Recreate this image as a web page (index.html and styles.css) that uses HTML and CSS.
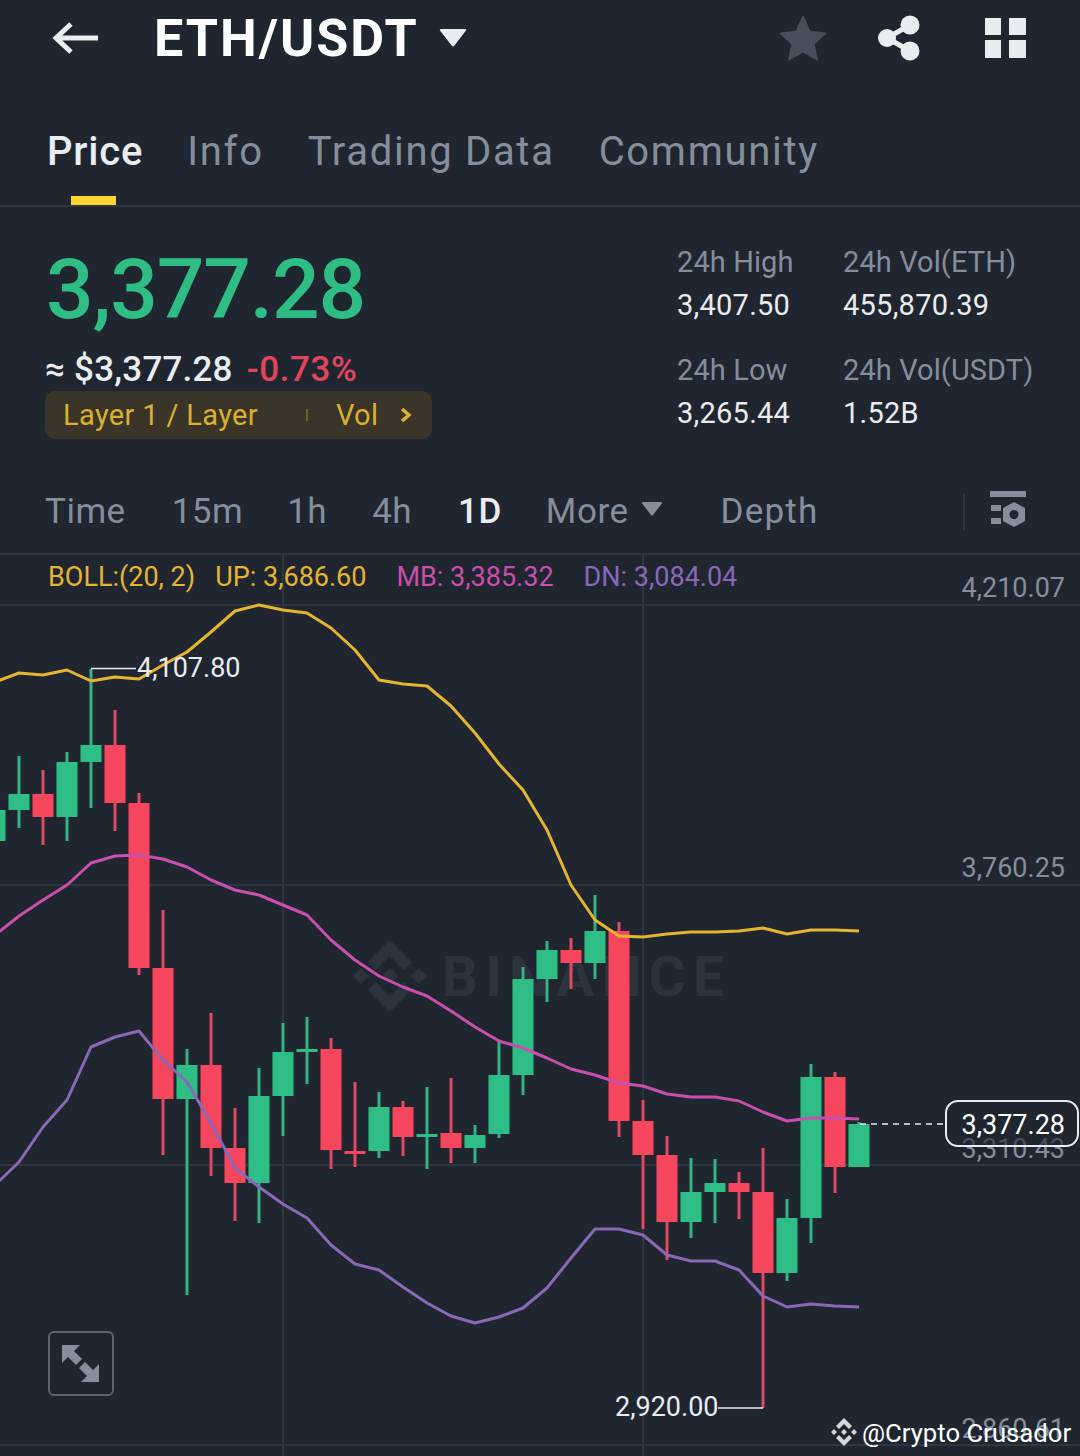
FILE: index.html
```html
<!DOCTYPE html>
<html lang="en">

<head>
  <meta charset="utf-8">
  <title>ETH/USDT</title>
  <link rel="stylesheet" href="styles.css">
</head>

<body>
  <div id="mainContainer">
    <div id="topBar">
      <svg class="backIcon" width="46" height="32" viewBox="0 0 46 32">
        <path d="M46 16H5M19 2L4 16l15 14" />
      </svg>
      <span class="pairName">ETH/USDT</span>
      <svg class="pairCaret" width="28" height="20" viewBox="0 0 28 20">
        <path d="M2 2h24a1 1 0 0 1 1 1.600L15 19a1.500 1.500 0 0 1-2 0L1 3.600A1 1 0 0 1 2 2z" />
      </svg>
      <div class="topActions">
        <svg class="starIcon" width="46" height="46" viewBox="0 0 46 46">
          <path d="M23 2l6.500 14.500L45 18.500 33.500 29 37 44.500 23 36.500 9 44.500 12.500 29 1 18.500l15.500-2z" />
        </svg>
        <svg class="shareIcon" width="42" height="46" viewBox="0 0 42 46">
          <path class="shareLines" d="M32 10L9 23l23 13" />
          <circle cx="32" cy="10" r="9.500" />
          <circle cx="9" cy="23" r="9" />
          <circle cx="32" cy="36" r="9.500" />
        </svg>
        <svg class="gridIcon" width="41" height="40" viewBox="0 0 41 40">
          <path d="M0 0h16v17H0zM24 0h17v17H24zM0 22h16v18H0zM24 22h17v18H24z" />
        </svg>
      </div>
    </div>

    <div id="tabBar">
      <a class="tab active">Price</a>
      <a class="tab">Info</a>
      <a class="tab">Trading Data</a>
      <a class="tab">Community</a>
    </div>

    <div id="summary">
      <div class="priceBlock">
        <div class="lastPrice">3,377.28</div>
        <div class="fiatLine"><span class="fiat">≈ $3,377.28</span><span class="change">-0.73%</span></div>
        <div class="tagPill">
          <span class="tagName">Layer 1 / Layer</span>
          <i class="tagRule"></i>
          <span class="tagVol">Vol</span>
          <svg class="tagArrow" width="12" height="16" viewBox="0 0 12 16">
            <path d="M2 2l7 6-7 6" />
          </svg>
        </div>
      </div>
      <div class="statGrid">
        <div class="stat"><span class="statLabel">24h High</span><span class="statValue">3,407.50</span></div>
        <div class="stat"><span class="statLabel">24h Vol(ETH)</span><span class="statValue">455,870.39</span></div>
        <div class="stat"><span class="statLabel">24h Low</span><span class="statValue">3,265.44</span></div>
        <div class="stat"><span class="statLabel">24h Vol(USDT)</span><span class="statValue">1.52B</span></div>
      </div>
    </div>

    <div id="intervalBar">
      <span class="interval time">Time</span>
      <span class="interval m15">15m</span>
      <span class="interval h1">1h</span>
      <span class="interval h4">4h</span>
      <span class="interval d1 active">1D</span>
      <span class="interval more">More</span>
      <svg class="moreCaret" width="20" height="14" viewBox="0 0 20 14">
        <path d="M1 0h18a1 1 0 0 1 .8 1.600L11 13a1.300 1.300 0 0 1-2 0L.2 1.600A1 1 0 0 1 1 0z" />
      </svg>
      <span class="interval depth">Depth</span>
      <i class="intervalRule"></i>
      <svg class="settingsIcon" width="37" height="37" viewBox="0 0 37 37">
        <path d="M0 0h36v6H0zM1 14h10v6H1zM1 27h10v6H1z" />
        <path fill-rule="evenodd" d="M24 11l11 6v13l-11 6-11-6V17zM24 19a4.500 4.500 0 1 0 .01 0z" />
      </svg>
    </div>

    <div id="chart">
      <svg class="chartCanvas" width="1080" height="901" viewBox="0 555 1080 901">
        <path class="grid" d="M0 605H1080M0 885H1080M0 1165H1080M0 1445H1080M283 555V1456M643 555V1456" />

        <g class="watermark">
          <path d="M390 940l22 22-8 8-14-14-14 14-8-8zM361 968l8 8-8 8-8-8zM419 968l8 8-8 8-8-8zM390 968l8 8-8 8-8-8zM390 1012l-22-22 8-8 14 14 14-14 8 8z" />
          <text class="markName" x="442" y="996">BINANCE</text>
        </g>

        <!-- candles: wicks and bodies are strokes, one path per colour -->
        <path class="wick up" d="M19 756V828M67 752V841M91 669V808M187 1049V1295M259 1068V1223M283 1023V1136M307 1017V1084M379 1092V1158M427 1087V1169M475 1125V1163M499 1041V1138M523 967V1095M547 941V1002M595 895V979M691 1158V1238M715 1159V1223M787 1199V1281M811 1064V1243M859 1122V1126" />
        <path class="wick down" d="M43 770V845M115 710V831M139 793V975M163 910V1155M211 1013V1176M235 1108V1221M331 1038V1169M355 1082V1167M403 1101V1156M451 1078V1163M571 938V989M619 922V1137M643 1100V1229M667 1136V1260M739 1172V1219M763 1148V1408M835 1072V1193" />
        <path class="body up" d="M-5 810V841M19 794V810M67 762V817M91 745V762M187 1065V1099M259 1096V1183M283 1052V1096M307 1049V1052M379 1107V1151M427 1134V1137M475 1135V1148M499 1075V1134M523 979V1075M547 950V979M595 931V963M691 1192V1222M715 1183V1192M787 1218V1273M811 1077V1218M859 1124V1167" />
        <path class="body down" d="M43 794V817M115 745V803M139 803V968M163 968V1099M211 1065V1148M235 1148V1183M331 1049V1150M355 1151V1154M403 1107V1137M451 1133V1148M571 950V963M619 931V1121M643 1121V1155M667 1155V1222M739 1183V1192M763 1192V1273M835 1077V1167" />

        <polyline class="band upper" points="-5,682 19,673 43,675 67,670 91,681 115,677 139,679 163,665 187,652 211,632 235,611 259,605 283,610 307,613 331,628 355,650 379,680 403,684 427,686 451,706 475,733 499,764 523,790 547,830 571,885 595,920 619,936 643,937 667,934 691,932 715,932 739,931 763,928 787,934 811,930 835,930 859,931" />
        <polyline class="band middle" points="-5,935 19,916 43,900 67,885 91,863 115,856 139,855 163,859 187,867 211,880 235,890 259,895 283,905 307,915 331,940 355,960 379,976 403,987 427,996 451,1011 475,1027 499,1041 523,1048 547,1058 571,1069 595,1075 619,1083 643,1086 667,1094 691,1097 715,1097 739,1101 763,1112 787,1121 811,1118 835,1118 859,1119" />
        <polyline class="band lower" points="-5,1185 19,1162 43,1127 67,1100 91,1047 115,1037 139,1031 163,1060 187,1082 211,1123 235,1168 259,1187 283,1204 307,1218 331,1245 355,1264 379,1270 403,1287 427,1303 451,1316 475,1323 499,1317 523,1308 547,1288 571,1258 595,1229 619,1229 643,1235 667,1255 691,1261 715,1261 739,1270 763,1296 787,1307 811,1304 835,1306 859,1307" />

        <text class="axisLabel" x="1065" y="597">4,210.07</text>
        <text class="axisLabel" x="1065" y="877">3,760.25</text>
        <text class="axisLabel" x="1065" y="1158">3,310.43</text>
        <text class="axisLabel" x="1065" y="1438">2,860.61</text>

        <path class="callout" d="M91 668.500H136M718 1408H763" />
        <text class="extreme" x="137" y="677">4,107.80</text>
        <text class="extreme" x="615" y="1416">2,920.00</text>

        <path class="lastLine" d="M860 1124H946" />
        <rect class="lastBox" x="946" y="1101" width="132" height="45" rx="12" />
        <text class="lastValue" x="1065" y="1134">3,377.28</text>

        <path class="creditLogo" d="M844 1418l8 8-3 3-5-5-5 5-3-3zM834 1429l3 3-3 3-3-3zM854 1429l3 3-3 3-3-3zM844 1429l3 3-3 3-3-3zM844 1446l-8-8 3-3 5 5 5-5 3 3z" />
        <text class="credit" x="862" y="1442">@Crypto Crusador</text>
      </svg>

      <div class="legend">
        <span class="legendBoll">BOLL:(20, 2)</span>
        <span class="legendUp">UP: 3,686.60</span>
        <span class="legendMb">MB: 3,385.32</span>
        <span class="legendDn">DN: 3,084.04</span>
      </div>

      <button class="expandButton">
        <svg width="38" height="38" viewBox="0 0 38 38">
          <path d="M0 0h18L12 6 20 14 14 20 6 12 0 18zM37 37H19l6-6-8-8 6-6 8 8 6-6z" />
        </svg>
      </button>
    </div>
  </div>
</body>

</html>
```

FILE: styles.css
```css
:root {
  --page-bg: #1f2630;
  --line: #2f3640;
  --text-white: #eaecef;
  --text-gray: #848e9c;
  --theme-yellow: #fcd535;
  --up-green: #2ebd85;
  --down-red: #f6465d;
}

* {
  padding: 0;
  margin: 0;
  box-sizing: border-box;
}

html,
body {
  height: 100%;
  width: 100%;
  overflow: hidden;
  background: var(--page-bg);
  font-family: Roboto, "Liberation Sans", sans-serif;
}

#mainContainer {
  width: 1080px;
  height: 1456px;
  overflow: hidden;
  color: var(--text-white);
}

#topBar {
  display: flex;
  align-items: center;
  height: 76px;
  padding-left: 52px;
}

.backIcon path {
  fill: none;
  stroke: var(--text-white);
  stroke-width: 5;
}

.pairName {
  margin-left: 56px;
  font-size: 52px;
  font-weight: 700;
  letter-spacing: 2px;
  color: #fff;
}

.pairCaret {
  margin-left: 20px;
  margin-top: -2px;
  fill: var(--text-white);
}

.topActions {
  display: flex;
  align-items: center;
  margin-left: auto;
  padding-right: 54px;
}

.starIcon {
  fill: #474f5c;
  stroke: #474f5c;
  stroke-width: 2;
  stroke-linejoin: round;
}

.shareIcon {
  margin-left: 52px;
  fill: var(--text-white);
}

.shareLines {
  fill: none;
  stroke: var(--text-white);
  stroke-width: 5;
}

.gridIcon {
  margin-left: 65px;
  fill: var(--text-white);
}

#tabBar {
  display: flex;
  gap: 44px;
  height: 131px;
  padding: 48px 0 0 47px;
  border-bottom: 2px solid var(--line);
}

.tab {
  position: relative;
  font-size: 40px;
  line-height: 56px;
  color: var(--text-gray);
  letter-spacing: 1.700px;
}

.tab.active {
  color: var(--text-white);
  font-weight: 500;
  letter-spacing: 0.800px;
}

.tab.active::after {
  content: "";
  position: absolute;
  left: 24px;
  top: 72px;
  width: 45px;
  height: 9px;
  background: var(--theme-yellow);
}

#summary {
  display: flex;
  height: 263px;
  padding-left: 45px;
}

.priceBlock {
  width: 632px;
}

.lastPrice {
  margin-top: 37px;
  margin-left: 1px;
  font-size: 84px;
  line-height: 92px;
  font-weight: 500;
  letter-spacing: -1.200px;
  color: var(--up-green);
}

.fiatLine {
  display: flex;
  gap: 14px;
  margin-top: 12px;
  font-size: 35px;
  line-height: 44px;
  font-weight: 500;
  letter-spacing: 0.200px;
}

.change {
  color: #e0475f;
  letter-spacing: 0.600px;
}

.tagPill {
  display: flex;
  align-items: center;
  width: 387px;
  height: 48px;
  margin-top: -1px;
  padding-left: 18px;
  border-radius: 10px;
  background: #3a3528;
  color: #d9b02f;
  font-size: 29px;
  letter-spacing: 0.350px;
}

.tagRule {
  width: 2px;
  height: 12px;
  margin-left: 48px;
  background: #6b5f30;
}

.tagVol {
  margin-left: 28px;
}

.tagArrow {
  margin-left: 22px;
  fill: none;
  stroke: #d9b02f;
  stroke-width: 3.5;
}

.statGrid {
  display: grid;
  grid-template-columns: 166px auto;
  grid-auto-rows: 108px;
  padding-top: 37px;
}

.stat {
  display: flex;
  flex-direction: column;
  gap: 6px;
}

.statLabel {
  font-size: 29px;
  line-height: 37px;
  letter-spacing: 0.100px;
  color: var(--text-gray);
}

.statValue {
  font-size: 29px;
  line-height: 37px;
  letter-spacing: 0.250px;
  color: var(--text-white);
}

#intervalBar {
  display: flex;
  align-items: center;
  height: 85px;
  padding-left: 45px;
  border-bottom: 2px solid var(--line);
}

.interval {
  font-size: 35px;
  letter-spacing: 0.500px;
  color: var(--text-gray);
}

.interval.active {
  color: var(--text-white);
  font-weight: 500;
}

.m15 {
  margin-left: 46px;
}

.h1 {
  margin-left: 44px;
}

.h4 {
  margin-left: 45px;
}

.d1 {
  margin-left: 46px;
}

.more {
  margin-left: 44px;
}

.moreCaret {
  margin-left: 14px;
  margin-top: -6px;
  fill: var(--text-gray);
}

.depth {
  margin-left: 58px;
  letter-spacing: 1.200px;
}

.intervalRule {
  width: 2px;
  height: 36px;
  margin-left: auto;
  background: var(--line);
}

.settingsIcon {
  margin-left: 25px;
  margin-right: 53px;
  margin-top: -4px;
  fill: var(--text-gray);
}

#chart {
  position: relative;
  height: 901px;
  overflow: hidden;
}

.chartCanvas {
  display: block;
}

.grid {
  fill: none;
  stroke: var(--line);
  stroke-width: 2;
}

.watermark {
  fill: #2c333d;
}

.markName {
  font-size: 56px;
  font-weight: 700;
  letter-spacing: 7.500px;
}

.wick,
.body,
.band,
.callout,
.lastLine {
  fill: none;
}

.wick {
  stroke-width: 3;
}

.wick.up {
  stroke: #35b184;
}

.wick.down {
  stroke: #e0495f;
}

.body {
  stroke-width: 21;
}

.body.up {
  stroke: var(--up-green);
}

.body.down {
  stroke: var(--down-red);
}

.band {
  stroke-width: 3;
  stroke-linejoin: round;
}

.band.upper {
  stroke: #e6b530;
}

.band.middle {
  stroke: #c94fae;
}

.band.lower {
  stroke: #8a68b8;
}

.axisLabel {
  fill: var(--text-gray);
  font-size: 27px;
  text-anchor: end;
}

.callout {
  stroke: var(--text-white);
  stroke-width: 1.500;
}

.extreme {
  fill: var(--text-white);
  font-size: 27px;
}

.lastLine {
  stroke: var(--text-white);
  stroke-width: 1.500;
  stroke-dasharray: 6 5;
}

.lastBox {
  fill: var(--page-bg);
  fill-opacity: 0.6;
  stroke: var(--text-white);
  stroke-width: 2;
}

.lastValue {
  fill: #fff;
  font-size: 27px;
  text-anchor: end;
}

.creditLogo {
  fill: #d5d7da;
}

.credit {
  fill: #fff;
  font-size: 25.700px;
}

.legend {
  position: absolute;
  top: 6px;
  left: 48px;
  display: flex;
  gap: 20px;
  font-size: 27px;
  line-height: 32px;
}

.legendBoll,
.legendUp {
  color: #e6b530;
}

.legendMb {
  margin-left: 10px;
  color: #c94fae;
}

.legendDn {
  margin-left: 10px;
  color: #8a68b8;
}

.expandButton {
  position: absolute;
  left: 48px;
  top: 776px;
  display: flex;
  align-items: center;
  justify-content: center;
  width: 66px;
  height: 65px;
  background: transparent;
  border: 2px solid #5c6470;
  border-radius: 6px;
  fill: var(--text-gray);
}
```
